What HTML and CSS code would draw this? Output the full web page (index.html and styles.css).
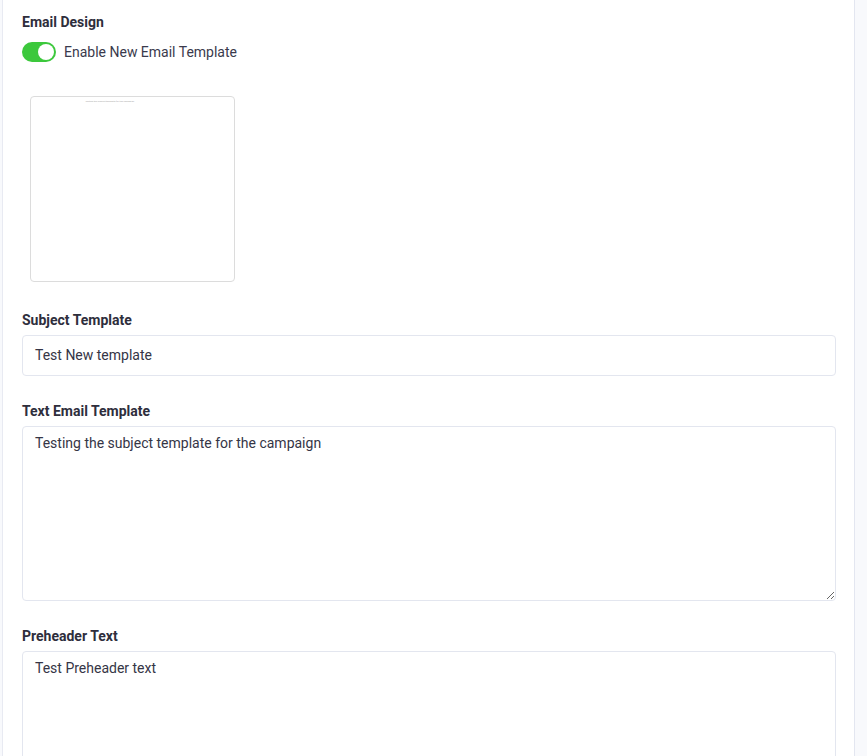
FILE: index.html
```html
<!DOCTYPE html>
<html>
<head>
<meta charset="utf-8">
<link rel="stylesheet" href="styles.css">
</head>
<body>
<div class="panel">
  <div class="section-title">Email Design</div>
  <div class="toggle-row">
    <span class="toggle"><span class="knob"></span></span>
    <span class="toggle-label">Enable New Email Template</span>
  </div>
  <div class="preview">
    <div class="preview-inner">
      <div class="email-body">Testing the subject template for the campaign</div>
    </div>
  </div>
  <div class="field">
    <div class="label">Subject Template</div>
    <div class="input">Test New template</div>
  </div>
  <div class="field">
    <div class="label">Text Email Template</div>
    <textarea class="textarea tall">Testing the subject template for the campaign</textarea>
  </div>
  <div class="field">
    <div class="label">Preheader Text</div>
    <textarea class="textarea tall">Test Preheader text</textarea>
  </div>
</div>
</body>
</html>
```
FILE: styles.css
```css
html, body {
  margin: 0;
  padding: 0;
  background: #f8f9fc;
  font-family: Roboto, "Liberation Sans", sans-serif;
  color: #353546;
  overflow: hidden;
}
.panel {
  margin-left: 2px;
  width: 853px;
  box-sizing: border-box;
  background: #ffffff;
  border-left: 1px solid #e8eaf2;
  border-right: 1px solid #e3e6f0;
  padding: 12px 20px 0 19px;
  min-height: 756px;
}
.section-title, .label {
  font-size: 14px;
  font-weight: 700;
  line-height: 20px;
  color: #2e2e3c;
}
.toggle-row {
  display: flex;
  align-items: center;
  gap: 8px;
  margin-top: 10px;
  height: 20px;
}
.toggle {
  display: flex;
  align-items: center;
  justify-content: flex-end;
  width: 34px;
  height: 20px;
  box-sizing: border-box;
  padding: 2px;
  border-radius: 10px;
  background: #3cc83c;
}
.knob {
  width: 16px;
  height: 16px;
  border-radius: 50%;
  background: #ffffff;
}
.toggle-label {
  font-size: 14px;
  color: #3a3a4c;
  line-height: 20px;
}
.preview {
  margin: 34px 0 0 8px;
  width: 205px;
  height: 186px;
  box-sizing: border-box;
  border: 1px solid #dcdcdc;
  border-radius: 4px;
  overflow: hidden;
  background: #fff;
}
.preview-inner {
  width: 1200px;
  transform: scale(0.17);
  transform-origin: 0 0;
}
.email-body {
  width: 560px;
  margin: 0 auto;
  padding: 16px 20px;
  font-size: 14px;
  color: #a8a8a8;
}
.field {
  margin-top: 28px;
}
.field + .field {
  margin-top: 25px;
}
.label {
  margin-bottom: 5px;
}
.input, .textarea {
  display: block;
  width: 814px;
  box-sizing: border-box;
  border: 1px solid #e3e6ef;
  border-radius: 4px;
  background: #fff;
  font-family: Roboto, "Liberation Sans", sans-serif;
  font-size: 14px;
  color: #353546;
  padding: 10px 12px;
  line-height: 19px;
}
.input {
  height: 41px;
}
.textarea {
  margin: 0;
  resize: vertical;
  outline: none;
}
.tall {
  height: 175px;
  padding-top: 7px;
}
```
